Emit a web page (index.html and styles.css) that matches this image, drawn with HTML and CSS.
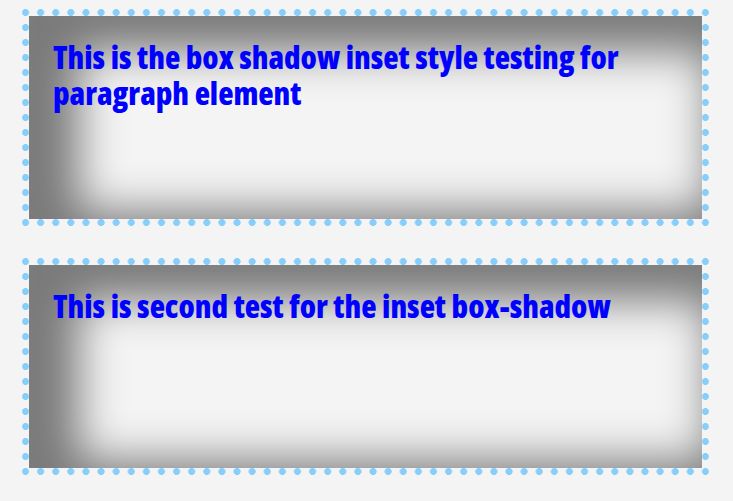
FILE: index.html
```html
<!DOCTYPE html>
<html>
<head>
<meta charset="utf-8">
<link rel="stylesheet" href="styles.css">
</head>
<body>
<div class="page">
  <p class="shadow-box">This is the box shadow inset style testing for paragraph element</p>
  <p class="shadow-box">This is second test for the inset box-shadow</p>
</div>
</body>
</html>
```

FILE: styles.css
```css
html, body {
  margin: 0;
  padding: 0;
  background: #f4f4f4;
}

.page {
  display: flex;
  flex-direction: column;
  gap: 32px;
  padding: 9px 24px 0 22px;
}

.shadow-box {
  box-sizing: border-box;
  margin: 0;
  height: 217px;
  border: 7px solid transparent;
  padding: 23px 24px;
  background:
    linear-gradient(#f4f4f4, #f4f4f4) padding-box,
    radial-gradient(circle, #87cefa 3.2px, rgba(135, 206, 250, 0) 3.8px) -4.06px -4px / 15.111px 15px repeat border-box;
  box-shadow: inset 28px 14px 44px 22px #7a7a7a;
  color: #0000ff;
  font-family: "Open Sans", "DejaVu Sans Condensed", sans-serif;
  font-weight: 800;
  font-stretch: 75%;
  font-size: 31.6px;
  line-height: 36px;
}
```
